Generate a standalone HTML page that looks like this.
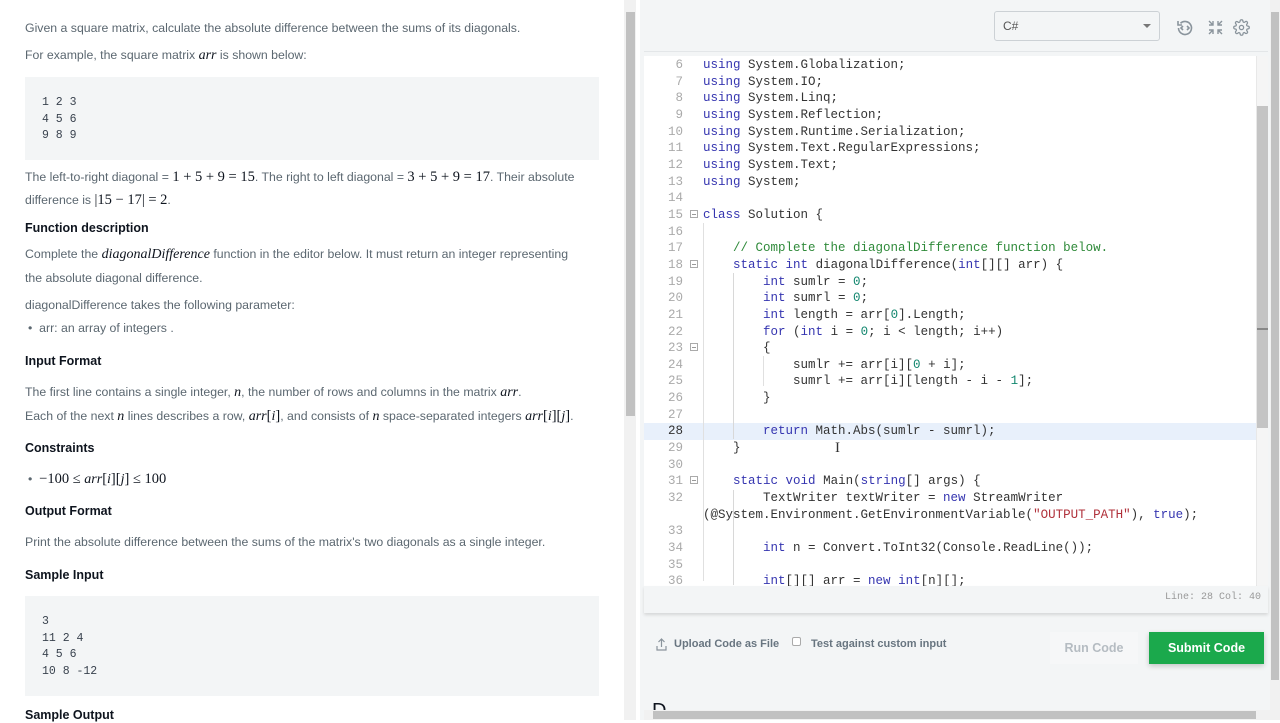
<!DOCTYPE html>
<html><head><meta charset="utf-8"><style>
*{margin:0;padding:0;box-sizing:border-box}
body{width:1280px;height:720px;overflow:hidden;background:#fff;font-family:"Liberation Sans",sans-serif;position:relative}
.a{position:absolute;white-space:nowrap}
.t{font-size:12.3px;color:#5b6770}
.h{font-size:12.5px;color:#0e141e;font-weight:bold}
.m{font-family:"Liberation Serif",serif;font-style:italic;font-size:14px;color:#0e141e}
.n{font-family:"Liberation Serif",serif;font-size:14.5px;color:#0e141e}
.pre{position:absolute;left:25px;width:574px;background:#f3f5f6;font-family:"Liberation Mono",monospace;font-size:11.5px;color:#39424e;line-height:16.7px;padding:16px 17px}
.code{position:absolute;font-family:"Liberation Mono",monospace;font-size:12.5px;color:#333;white-space:pre;height:16.65px;line-height:16.65px}
.ln{position:absolute;left:650px;width:33px;text-align:right;font-family:"Liberation Mono",monospace;font-size:12.5px;color:#aaa;line-height:16.65px}
.k{color:#3535b0}.c{color:#2f8a3a}.num{color:#11866e}.s{color:#b0303a}
.fold{position:absolute;left:690px;width:8px;height:8px;border:1px solid #aaa}
.fold:after{content:"";position:absolute;left:1px;top:3px;width:4px;height:1px;background:#999}
</style></head><body>
<div class="a t" style="left:25px;top:21px">Given a square matrix, calculate the absolute difference between the sums of its diagonals.</div>
<div class="a t" style="left:25px;top:48px">For example, the square matrix <span class="m">arr</span> is shown below:</div>
<div class="pre" style="top:77px;height:83px;padding-top:18px">1 2 3<br>4 5 6<br>9 8 9</div>
<div class="a t" style="left:25px;top:169px">The left-to-right diagonal = <span class="n">1 + 5 + 9 = 15</span>. The right to left diagonal = <span class="n">3 + 5 + 9 = 17</span>. Their absolute</div>
<div class="a t" style="left:25px;top:192px">difference is <span class="n">|15 − 17| = 2</span>.</div>
<div class="a h" style="left:25px;top:221px">Function description</div>
<div class="a t" style="left:25px;top:247px">Complete the <span class="m">diagonalDifference</span> function in the editor below. It must return an integer representing</div>
<div class="a t" style="left:25px;top:271px">the absolute diagonal difference.</div>
<div class="a t" style="left:25px;top:298px">diagonalDifference takes the following parameter:</div>
<div class="a t" style="left:28px;top:321px">•&nbsp;&nbsp;arr: an array of integers .</div>
<div class="a h" style="left:25px;top:354px">Input Format</div>
<div class="a t" style="left:25px;top:385px">The first line contains a single integer, <span class="m">n</span>, the number of rows and columns in the matrix <span class="m">arr</span>.</div>
<div class="a t" style="left:25px;top:408px">Each of the next <span class="m">n</span> lines describes a row, <span class="m">arr</span><span class="n">[</span><span class="m">i</span><span class="n">]</span>, and consists of <span class="m">n</span> space-separated integers <span class="m">arr</span><span class="n">[</span><span class="m">i</span><span class="n">][</span><span class="m">j</span><span class="n">]</span>.</div>
<div class="a h" style="left:25px;top:441px">Constraints</div>
<div class="a t" style="left:28px;top:471px">•&nbsp;&nbsp;<span class="n">−100 ≤ </span><span class="m">arr</span><span class="n">[</span><span class="m">i</span><span class="n">][</span><span class="m">j</span><span class="n">] ≤ 100</span></div>
<div class="a h" style="left:25px;top:504px">Output Format</div>
<div class="a t" style="left:25px;top:535px">Print the absolute difference between the sums of the matrix's two diagonals as a single integer.</div>
<div class="a h" style="left:25px;top:568px">Sample Input</div>
<div class="pre" style="top:596px;height:100px;padding-top:18px">3<br>11 2 4<br>4 5 6<br>10 8 -12</div>
<div class="a h" style="left:25px;top:708px">Sample Output</div>
<div class="a" style="left:624px;top:0;width:12px;height:720px;background:#f1f1f1"></div>
<div class="a" style="left:626px;top:12px;width:9px;height:404px;background:#c1c1c1"></div>
<div class="a" style="left:640px;top:0;width:630px;height:720px;background:#f3f5f6"></div>
<div class="a" style="left:644px;top:0;width:624px;height:52px;background:#f3f5f6;border-bottom:1px solid #e3e6e8"></div>
<div class="a" style="left:994px;top:11px;width:166px;height:30px;border:1px solid #ccd1d5;border-radius:3px;background:#f3f5f6;font-size:12px;color:#555;padding:7px 8px">C#</div>
<div class="a" style="left:1143px;top:24px;width:0;height:0;border-left:4px solid transparent;border-right:4px solid transparent;border-top:4px solid #777"></div>
<svg class="a" style="left:1175px;top:18px" width="20" height="20" viewBox="0 0 20 20" fill="none" stroke="#8a949c" stroke-width="1.6"><path d="M3.5 10a6.5 6.5 0 1 0 2-4.7"/><path d="M3 3v4h4"/><path d="M8 8l-2 2 2 2M12 8l2 2-2 2"/></svg>
<svg class="a" style="left:1207px;top:19px" width="17" height="17" viewBox="0 0 17 17" fill="none" stroke="#8a949c" stroke-width="1.4"><path d="M2 2l4 4M6 2v4H2M15 2l-4 4M11 2v4h4M2 15l4-4M2 11h4v4M15 15l-4-4M15 11h-4v4"/></svg>
<svg class="a" style="left:1233px;top:19px" width="17" height="17" viewBox="0 0 24 24" fill="none" stroke="#8a949c" stroke-width="1.8"><circle cx="12" cy="12" r="3"/><path d="M19.4 15a1.7 1.7 0 0 0 .3 1.8l.1.1a2 2 0 1 1-2.8 2.8l-.1-.1a1.7 1.7 0 0 0-1.8-.3 1.7 1.7 0 0 0-1 1.5V21a2 2 0 1 1-4 0v-.1a1.7 1.7 0 0 0-1.1-1.5 1.7 1.7 0 0 0-1.8.3l-.1.1a2 2 0 1 1-2.8-2.8l.1-.1a1.7 1.7 0 0 0 .3-1.8 1.7 1.7 0 0 0-1.5-1H3a2 2 0 1 1 0-4h.1a1.7 1.7 0 0 0 1.5-1.1 1.7 1.7 0 0 0-.3-1.8l-.1-.1a2 2 0 1 1 2.8-2.8l.1.1a1.7 1.7 0 0 0 1.8.3H9a1.7 1.7 0 0 0 1-1.5V3a2 2 0 1 1 4 0v.1a1.7 1.7 0 0 0 1 1.5 1.7 1.7 0 0 0 1.8-.3l.1-.1a2 2 0 1 1 2.8 2.8l-.1.1a1.7 1.7 0 0 0-.3 1.8V9a1.7 1.7 0 0 0 1.5 1H21a2 2 0 1 1 0 4h-.1a1.7 1.7 0 0 0-1.5 1z"/></svg>
<div class="a" style="left:644px;top:56px;width:624px;height:530px;background:#fff;overflow:hidden"></div>
<div class="a" style="left:644px;top:423px;width:612px;height:17px;background:#e8f0fb"></div>
<div class="a" style="left:1256px;top:56px;width:12px;height:530px;background:#f5f5f5;border-left:1px solid #e8e8e8"></div>
<div class="a" style="left:1257px;top:106px;width:11px;height:322px;background:#c4c4c4"></div>
<div class="a" style="left:1257px;top:328px;width:11px;height:2px;background:#888"></div>
<div class="a" style="left:703px;top:223px;width:1px;height:358px;background:#e0e0e0"></div>
<div class="a" style="left:733px;top:273px;width:1px;height:166px;background:#d8d8d8"></div>
<div class="a" style="left:733px;top:490px;width:1px;height:95px;background:#d8d8d8"></div>
<div class="a" style="left:763px;top:356px;width:1px;height:30px;background:#e0e0e0"></div>
<div class="fold" style="top:210px"></div><div class="fold" style="top:260px"></div><div class="fold" style="top:343px"></div><div class="fold" style="top:476px"></div>
<div style="position:absolute;left:0;top:0;width:1280px;height:586px;overflow:hidden">
<div class="ln" style="top:57px">6<br>7<br>8<br>9<br>10<br>11<br>12<br>13<br>14<br>15<br>16<br>17<br>18<br>19<br>20<br>21<br>22<br>23<br>24<br>25<br>26<br>27<br><span style="color:#333">28</span><br>29<br>30<br>31<br>32<br>&nbsp;<br>33<br>34<br>35<br>36</div>
<div class="code" style="left:703px;top:57px;height:auto"><span class="k">using</span> System.Globalization;
<span class="k">using</span> System.IO;
<span class="k">using</span> System.Linq;
<span class="k">using</span> System.Reflection;
<span class="k">using</span> System.Runtime.Serialization;
<span class="k">using</span> System.Text.RegularExpressions;
<span class="k">using</span> System.Text;
<span class="k">using</span> System;

<span class="k">class</span> Solution {

    <span class="c">// Complete the diagonalDifference function below.</span>
    <span class="k">static</span> <span class="k">int</span> diagonalDifference(<span class="k">int</span>[][] arr) {
        <span class="k">int</span> sumlr = <span class="num">0</span>;
        <span class="k">int</span> sumrl = <span class="num">0</span>;
        <span class="k">int</span> length = arr[<span class="num">0</span>].Length;
        <span class="k">for</span> (<span class="k">int</span> i = <span class="num">0</span>; i &lt; length; i++)
        {
            sumlr += arr[i][<span class="num">0</span> + i];
            sumrl += arr[i][length - i - <span class="num">1</span>];
        }

        <span class="k">return</span> Math.Abs(sumlr - sumrl);
    }

    <span class="k">static</span> <span class="k">void</span> Main(<span class="k">string</span>[] args) {
        TextWriter textWriter = <span class="k">new</span> StreamWriter
(@System.Environment.GetEnvironmentVariable(<span class="s">"OUTPUT_PATH"</span>), <span class="k">true</span>);

        <span class="k">int</span> n = Convert.ToInt32(Console.ReadLine());

        <span class="k">int</span>[][] arr = <span class="k">new</span> <span class="k">int</span>[n][];</div>
</div>
<div class="a" style="left:835px;top:440px;font-family:'Liberation Serif',serif;font-size:15px;color:#333">I</div>
<div class="a" style="left:644px;top:586px;width:624px;height:27px;background:#f3f5f6;box-shadow:0 2px 3px rgba(0,0,0,0.12)"></div>
<div class="a" style="left:1165px;top:592px;font-family:'Liberation Mono',monospace;font-size:10px;color:#999">Line: 28 Col: 40</div>
<svg class="a" style="left:656px;top:638px" width="11" height="13" viewBox="0 0 11 13" fill="none" stroke="#8a949c" stroke-width="1.2"><path d="M5.5 9V1M2.5 4l3-3 3 3M1 8v4h9V8"/></svg>
<div class="a" style="left:674px;top:638px;font-size:11px;color:#687580;font-weight:bold">Upload Code as File</div>
<div class="a" style="left:792px;top:637px;width:9px;height:9px;border:1px solid #aaa;border-radius:2px;background:#fff"></div>
<div class="a" style="left:811px;top:638px;font-size:11px;color:#687580;font-weight:bold">Test against custom input</div>
<div class="a" style="left:1050px;top:632px;width:88px;height:32px;background:#f6f7f8;color:#b5bcc2;font-size:12.5px;font-weight:bold;text-align:center;line-height:32px">Run Code</div>
<div class="a" style="left:1149px;top:632px;width:115px;height:32px;background:#1ba94c;color:#fff;font-size:12.5px;font-weight:bold;text-align:center;line-height:32px;box-shadow:0 2px 5px rgba(0,0,0,0.2)">Submit Code</div>
<div class="a" style="left:652px;top:700px;font-size:20px;color:#0e141e">D&nbsp;&nbsp;&nbsp;&nbsp;&nbsp;&nbsp;&nbsp;&nbsp;&nbsp;&nbsp;&nbsp;&nbsp;.</div>
<div class="a" style="left:644px;top:710px;width:626px;height:10px;background:#f1f1f1"></div>
<div class="a" style="left:653px;top:711px;width:603px;height:8px;background:#c1c1c1"></div>
<div class="a" style="left:1270px;top:0;width:10px;height:720px;background:#f1f1f1"></div>
<div class="a" style="left:1271px;top:12px;width:8px;height:668px;background:#c1c1c1"></div>
</body></html>
